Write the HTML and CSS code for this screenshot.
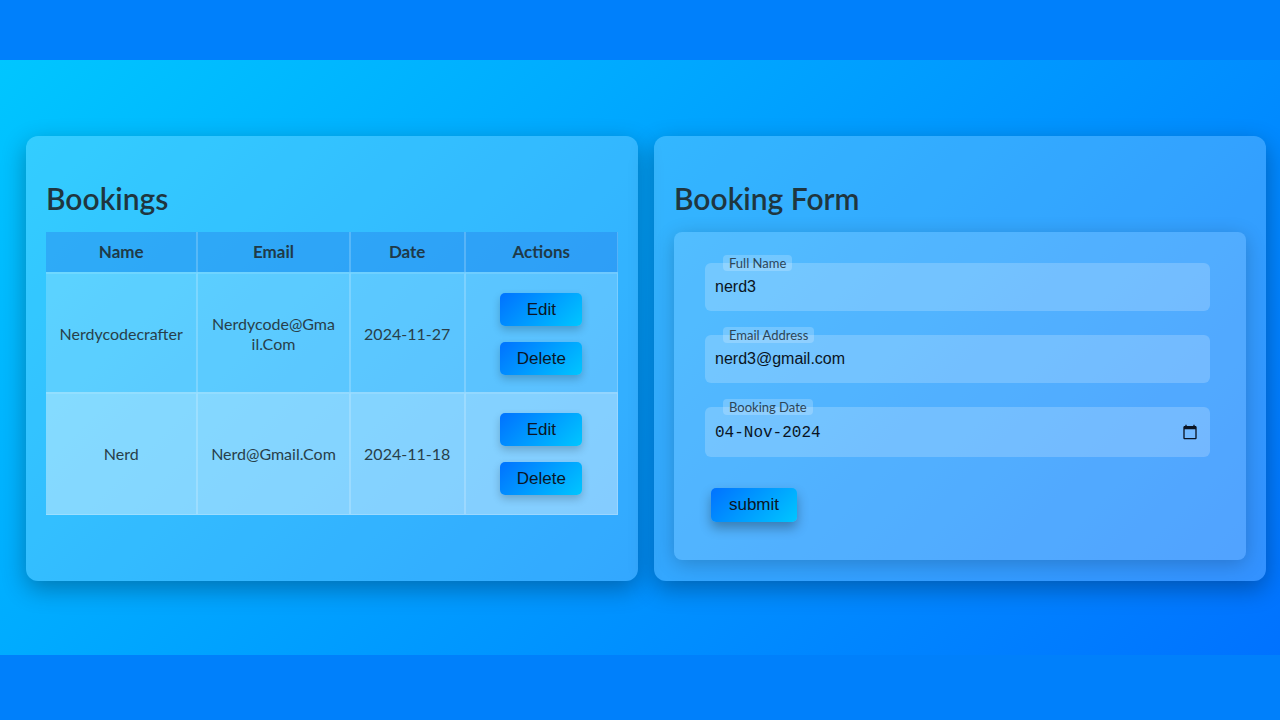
FILE: index.html
```html
<!DOCTYPE html>
<html lang="en">
<head>
<meta charset="utf-8">
<meta name="viewport" content="width=device-width, initial-scale=1">
<title>Bookings</title>
<link rel="stylesheet" href="styles.css">
</head>
<body>
<main class="stage">
  <section class="card">
    <h2 class="title">Bookings</h2>
    <table class="bookings">
      <colgroup><col class="col-wide"><col class="col-wide"><col class="col-date"><col class="col-wide"></colgroup>
      <thead>
        <tr><th>Name</th><th>Email</th><th>Date</th><th>Actions</th></tr>
      </thead>
      <tbody>
        <tr>
          <td>Nerdycodecrafter</td><td>Nerdycode@Gmail.Com</td><td>2024-11-27</td>
          <td><div class="actions"><button class="btn" type="button">Edit</button><button class="btn" type="button">Delete</button></div></td>
        </tr>
        <tr>
          <td>Nerd</td><td>Nerd@Gmail.Com</td><td>2024-11-18</td>
          <td><div class="actions"><button class="btn" type="button">Edit</button><button class="btn" type="button">Delete</button></div></td>
        </tr>
      </tbody>
    </table>
  </section>
  <section class="card">
    <h2 class="title">Booking Form</h2>
    <form class="form">
      <div class="field">
        <label class="label" for="name">Full Name</label>
        <input class="input" id="name" type="text" value="nerd3">
      </div>
      <div class="field">
        <label class="label" for="email">Email Address</label>
        <input class="input" id="email" type="email" value="nerd3@gmail.com">
      </div>
      <div class="field">
        <label class="label" for="date">Booking Date</label>
        <input class="input input-date" id="date" type="text" value="04-Nov-2024">
        <button class="picker" type="button" aria-label="Open calendar">
          <svg viewBox="0 0 24 24" width="16" height="16"><path d="M20 3h-1V1h-2v2H7V1H5v2H4c-1.100 0-2 .9-2 2v16c0 1.100.9 2 2 2h16c1.100 0 2-.9 2-2V5c0-1.100-.9-2-2-2zm0 18H4V8h16v13z"/></svg>
        </button>
      </div>
      <button class="btn btn-submit" type="submit">submit</button>
    </form>
  </section>
</main>
</body>
</html>
```

FILE: styles.css
```css
* {
  box-sizing: border-box;
}

body {
  margin: 0;
  min-height: 100vh;
  padding: 60px 0 65px;
  display: flex;
  background: #0080fb;
  color: #333;
  font-family: Lato, sans-serif;
  font-size: 16px;
  line-height: 20px;
}

.stage {
  flex: 1;
  display: grid;
  grid-template-columns: 1fr 1fr;
  align-content: center;
  gap: 16px;
  padding: 2px 14px 0 26px;
  background: linear-gradient(135deg, #00c6ff, #0072ff);
}

.card {
  padding: 44px 20px 21px;
  border-radius: 12px;
  background: rgba(255, 255, 255, 0.2);
  box-shadow: 0 8px 24px rgba(0, 0, 0, 0.3);
}

.title {
  margin: 0 0 16px;
  color: #1f363f;
  font-size: 30px;
  font-weight: 600;
  line-height: 36px;
}

.bookings {
  width: 100%;
  table-layout: fixed;
  border-collapse: separate;
  border-spacing: 0;
  text-align: center;
}

.col-date {
  width: 115px;
}

.bookings th,
.bookings td {
  border-right: 2px solid rgba(255, 255, 255, 0.2);
  overflow-wrap: anywhere;
}

.bookings th {
  padding: 10px;
  background: rgba(41, 128, 235, 0.4);
  color: #1f3a48;
  font-size: 17px;
  font-weight: 700;
}

.bookings td {
  padding: 19px 12px 17px;
  border-top: 2px solid rgba(255, 255, 255, 0.12);
  background: rgba(255, 255, 255, 0.2);
  color: #283f4a;
}

.bookings tbody tr:last-child td {
  padding-bottom: 19px;
  border-bottom: 1px solid rgba(255, 255, 255, 0.2);
  background: rgba(255, 255, 255, 0.4);
}

.bookings th:last-child,
.bookings td:last-child {
  border-right-width: 1px;
}

.actions {
  display: flex;
  flex-direction: column;
  align-items: center;
  gap: 16px;
}

.btn {
  width: 82px;
  height: 33px;
  padding: 0;
  border: 0;
  border-radius: 5px;
  background: linear-gradient(135deg, #0072ff, #00c6ff);
  box-shadow: 0 4px 8px rgba(0, 0, 0, 0.2);
  color: #0b1626;
  font: 17px "Liberation Sans", Arial, sans-serif;
}

.btn-submit {
  width: 86px;
  height: 34px;
  margin: 7px 0 0 6px;
  box-shadow: 0 6px 12px rgba(0, 0, 0, 0.3);
}

.form {
  padding: 31px 36px 38px 31px;
  border-radius: 8px;
  background: rgba(255, 255, 255, 0.15);
  box-shadow: 0 4px 20px rgba(0, 0, 0, 0.2);
}

.field {
  position: relative;
  margin-bottom: 24px;
}

.label {
  position: absolute;
  top: -8px;
  left: 18px;
  padding: 0 6px;
  border-radius: 4px;
  background: rgba(255, 255, 255, 0.2);
  color: #2c4558;
  font-size: 13px;
  line-height: 16px;
}

.input {
  display: block;
  width: 100%;
  height: 48px;
  padding: 10px;
  border: 0;
  border-radius: 6px;
  background: rgba(255, 255, 255, 0.2);
  color: #0a1424;
  font: 16px "Liberation Sans", Arial, sans-serif;
}

.input-date {
  height: 50px;
  padding-top: 12px;
  font-family: "Liberation Mono", monospace;
}

.picker {
  position: absolute;
  top: 17px;
  right: 12px;
  display: flex;
  padding: 0;
  border: 0;
  background: none;
  color: #0a1424;
}

.picker svg {
  fill: currentColor;
}
```
